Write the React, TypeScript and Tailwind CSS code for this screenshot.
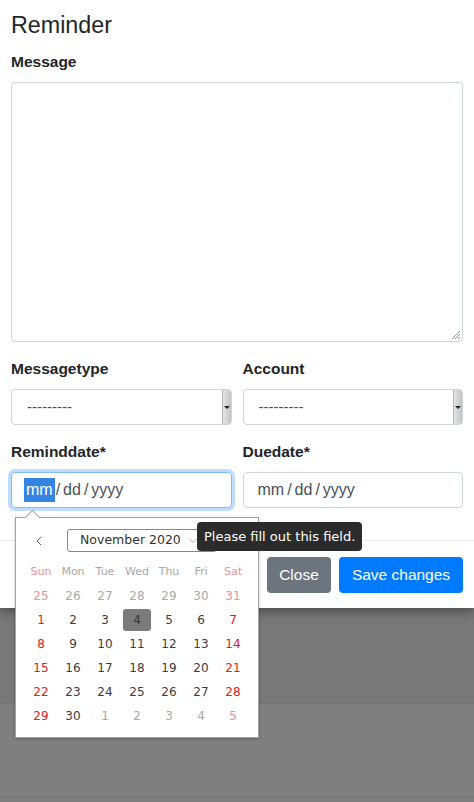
import { ChevronLeft, ChevronDown } from "lucide-react"

/** Calendar grid for November 2020, with leading and trailing days. */
const weeks: { d: number; muted?: boolean }[][] = [
    [25, 26, 27, 28, 29, 30, 31].map((d) => ({ d, muted: true })),
    [1, 2, 3, 4, 5, 6, 7].map((d) => ({ d })),
    [8, 9, 10, 11, 12, 13, 14].map((d) => ({ d })),
    [15, 16, 17, 18, 19, 20, 21].map((d) => ({ d })),
    [22, 23, 24, 25, 26, 27, 28].map((d) => ({ d })),
    [
        { d: 29 },
        { d: 30 },
        { d: 1, muted: true },
        { d: 2, muted: true },
        { d: 3, muted: true },
        { d: 4, muted: true },
        { d: 5, muted: true },
    ],
]

const weekdays = ["Sun", "Mon", "Tue", "Wed", "Thu", "Fri", "Sat"]

function dayClass(col: number, muted?: boolean) {
    const weekend = col === 0 || col === 6
    if (muted) return weekend ? "text-[#e8929a]" : "text-[#a8a8a8]"
    return weekend ? "text-[#e01b24]" : "text-[#3d3d3d]"
}

function FakeSelect() {
    return (
        <div className="flex h-[36px] items-stretch overflow-hidden rounded-[4px] border border-[#ced4da] bg-white">
            <div className="flex flex-1 items-center pl-[15px] text-[15px] text-[#495057]">---------</div>
            <div className="flex w-[9px] items-center justify-center border-l border-[#b8b8b8] bg-gradient-to-r from-[#e4e4e4] to-[#c4c4c4]">
                <span className="h-0 w-0 border-x-[3px] border-t-[3px] border-x-transparent border-t-[#222]" />
            </div>
        </div>
    )
}

function Label({ children }: { children: React.ReactNode }) {
    return <label className="mb-2 block text-[15.5px] font-bold leading-[24px] text-[#212529]">{children}</label>
}

function DateText({ first }: { first?: boolean }) {
    return (
        <>
            {first ? <span className="bg-[#3584e4] px-[2px] text-white">mm</span> : <span>mm</span>}
            <span className={first ? "ml-[1px] mr-[3px]" : "mx-[3px]"}>/</span>
            <span>dd</span>
            <span className="mx-[3px]">/</span>
            <span>yyyy</span>
        </>
    )
}

export default function App() {
    return (
        <div className="relative h-[802px] w-full overflow-hidden bg-[#7f7f7f] font-['Liberation_Sans',Arial,sans-serif]">
            <div className="relative z-10 bg-white shadow-[0_4px_10px_rgba(0,0,0,0.35)]">
                <div className="px-[11px] pt-[7px]">
                    <h5 className="text-[23.3px] leading-[36px] text-[#212529]">Reminder</h5>
                </div>

                <div className="px-[11px] pt-[7px] pb-[32px]">
                    <Label>Message</Label>
                    <div className="relative h-[260px] rounded-[4px] border border-[#ced4da] bg-white">
                        <svg className="absolute bottom-[1px] right-[1px]" width="12" height="12" viewBox="0 0 12 12">
                            <path d="M11 3 L3 11 M11 6 L6 11 M11 9 L9 11" stroke="#999" strokeWidth="1" />
                        </svg>
                    </div>

                    <div className="mt-[15px] grid grid-cols-2 gap-[11px]">
                        <div>
                            <Label>Messagetype</Label>
                            <FakeSelect />
                        </div>
                        <div>
                            <Label>Account</Label>
                            <FakeSelect />
                        </div>
                    </div>

                    <div className="mt-[15px] grid grid-cols-2 gap-[11px]">
                        <div>
                            <Label>Reminddate*</Label>
                            <div className="flex h-[36px] items-center rounded-[4px] border border-[#80bdff] bg-white pl-[12px] text-[16px] text-[#495057] shadow-[0_0_0_3px_rgba(0,123,255,0.25)]">
                                <DateText first />
                            </div>
                        </div>
                        <div>
                            <Label>Duedate*</Label>
                            <div className="flex h-[36px] items-center rounded-[4px] border border-[#ced4da] bg-white pl-[14px] text-[16px] text-[#495057]">
                                <DateText />
                            </div>
                        </div>
                    </div>
                </div>

                <div className="flex justify-end gap-2 border-t border-[#e9ecef] px-[11px] pt-[16px] pb-[15px]">
                    <button className="h-[36px] w-[64px] rounded-[4px] bg-[#6c757d] text-[15.5px] text-white">Close</button>
                    <button className="h-[36px] w-[124px] rounded-[4px] bg-[#007bff] text-[15.5px] text-white">Save changes</button>
                </div>
            </div>

            <div className="h-[95px] bg-[#787878]" />
            <div className="h-[94px] border-t border-[#747474] bg-[#7f7f7f]" />
            <div className="border-t border-[#767676]" />

            {/* date picker popup */}
            <div className="absolute left-[15px] top-[517px] z-20 h-[221px] w-[244px] border border-[#a3a3a3] bg-white font-['DejaVu_Sans',sans-serif] shadow-[0_1px_3px_rgba(0,0,0,0.25)]">
                <div className="absolute -top-[6px] left-[11px] h-[11px] w-[11px] rotate-45 border-l border-t border-[#a3a3a3] bg-white" />
                <div className="relative flex items-center pl-[15px] pt-[11px]">
                    <ChevronLeft size={16} strokeWidth={1.5} className="text-[#666]" />
                    <div className="ml-[20px] flex h-[23px] w-[150px] items-center whitespace-nowrap rounded-[3px] border border-[#888] pl-[12px] text-[12.5px] text-[#333]">
                        November 2020
                        <ChevronDown size={12} strokeWidth={1.5} className="ml-[6px] text-[#888]" />
                    </div>
                </div>
                <div className="mt-[8px] grid grid-cols-7 px-[9px] text-center text-[11px] leading-[24px]">
                    {weekdays.map((w, i) => (
                        <div key={w} className={i === 0 || i === 6 ? "text-[#e8929a]" : "text-[#a8a8a8]"}>
                            {w}
                        </div>
                    ))}
                </div>
                <div className="px-[9px] text-[12px]">
                    {weeks.map((row, r) => (
                        <div key={r} className="grid h-[24px] grid-cols-7 text-center">
                            {row.map((c, i) => (
                                <div key={i} className="flex items-center justify-center">
                                    {r === 1 && c.d === 4 ? (
                                        <span className="flex h-[22px] w-[28px] items-center justify-center rounded-[3px] bg-[#7b7b7b] text-[#333]">
                                            {c.d}
                                        </span>
                                    ) : (
                                        <span className={dayClass(i, c.muted)}>{c.d}</span>
                                    )}
                                </div>
                            ))}
                        </div>
                    ))}
                </div>
            </div>

            {/* validation tooltip */}
            <div className="absolute left-[197px] top-[522px] z-30 flex h-[29px] items-center rounded-[4px] bg-[#2b2b2b] px-[7px] font-['DejaVu_Sans',sans-serif] text-[13px] text-white">
                Please fill out this field.
            </div>
        </div>
    )
}
